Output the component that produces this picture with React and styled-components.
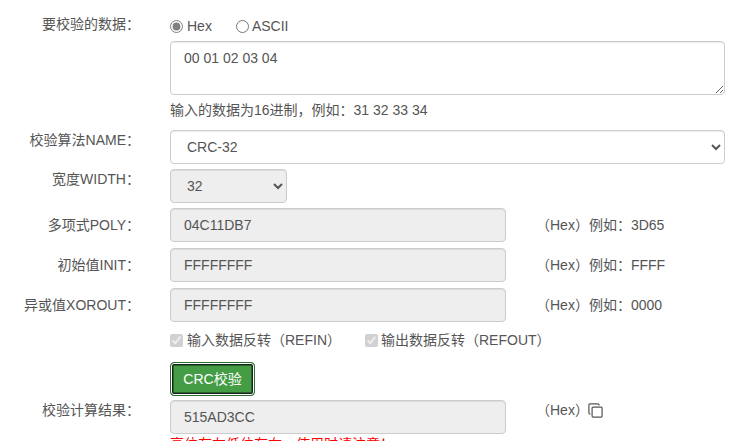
import React from "react";
import styled, { createGlobalStyle } from "styled-components";

const Global = createGlobalStyle`
  html, body { margin: 0; padding: 0; background: #fff; overflow: hidden; height: 441px; }
  body, input, select, textarea, button {
    font-family: "Liberation Sans", "Noto Sans CJK SC", sans-serif;
    font-size: 14px;
    color: #555;
  }
`;

const Form = styled.form`
  display: flex;
  flex-direction: column;
  padding-top: 13px;
`;

const Row = styled.div`
  display: grid;
  grid-template-columns: 140px 1fr;
  column-gap: 30px;
  margin-top: ${(p) => p.$top || 0}px;
`;

const Label = styled.label`
  text-align: right;
  line-height: 20px;
  padding-top: ${(p) => p.$pad || 0}px;
  white-space: nowrap;
`;

const Field = styled.div`
  display: flex;
  flex-direction: column;
  align-items: flex-start;
`;

const InlineField = styled.div`
  display: flex;
  align-items: center;
`;

const RadioGroup = styled.div`
  display: flex;
  align-items: center;
  height: 26px;
`;

const RadioLabel = styled.label`
  display: flex;
  align-items: center;
  margin-right: ${(p) => p.$gap || 0}px;
  line-height: 20px;
`;

const Radio = styled.input.attrs({ type: "radio", readOnly: true })`
  width: 13px;
  height: 13px;
  margin: 0 ${(p) => p.$after}px 0 0;
  accent-color: #808080;
`;

const TextArea = styled.textarea`
  box-sizing: border-box;
  display: block;
  width: 555px;
  height: 54px;
  margin-top: 2px;
  padding: 6px 13px;
  border: 1px solid #ccc;
  border-radius: 4px;
  line-height: 20px;
  box-shadow: inset 0 1px 1px rgba(0, 0, 0, 0.075);
  outline: none;
`;

const Hint = styled.div`
  line-height: 20px;
  margin-top: 5px;
`;

const Select = styled.select`
  box-sizing: border-box;
  display: block;
  width: ${(p) => p.$w}px;
  height: 34px;
  padding: 6px 12px;
  border: 1px solid #ccc;
  border-radius: 4px;
  background-color: ${(p) => (p.disabled ? "#eee" : "#fff")};
  box-shadow: inset 0 1px 1px rgba(0, 0, 0, 0.075);
  opacity: 1;
  color: #555;
`;

const TextInput = styled.input.attrs({ type: "text", readOnly: true })`
  box-sizing: border-box;
  display: block;
  width: 336px;
  height: 34px;
  padding: 6px 13px;
  border: 1px solid #ccc;
  border-radius: 4px;
  background: #eee;
  box-shadow: inset 0 1px 1px rgba(0, 0, 0, 0.075);
  outline: none;
`;

const Unit = styled.span`
  display: flex;
  align-items: center;
  margin-left: 30px;
  line-height: 20px;
`;

const ResultUnit = styled(Unit)`
  margin-top: -14px;
`;

const CopyIcon = styled.svg`
  width: 15px;
  height: 15px;
  margin-left: -1px;
  color: #555;
`;

const Checks = styled.div`
  display: flex;
  align-items: center;
  height: 20px;
`;

const CheckLabel = styled.label`
  display: flex;
  align-items: center;
  margin-right: ${(p) => p.$gap || 0}px;
  line-height: 20px;
`;

const Check = styled.input.attrs({ type: "checkbox", disabled: true, defaultChecked: true })`
  width: 13px;
  height: 13px;
  margin: 0 ${(p) => p.$after}px 0 0;
`;

const VerifyButton = styled.button`
  box-sizing: border-box;
  height: 34px;
  width: 85px;
  padding: 0;
  border: 1px solid #2f6b32;
  border-radius: 4px;
  background: #449d44;
  color: #fff;
  box-shadow: inset 0 0 0 1px #fff, inset 0 0 0 2.5px #16251a;
  line-height: 20px;
`;

const Warning = styled.div`
  color: #f00;
  line-height: 20px;
`;

const params = [
  { label: "多项式POLY：", value: "04C11DB7", example: "3D65", top: 5 },
  { label: "初始值INIT：", value: "FFFFFFFF", example: "FFFF", top: 6 },
  { label: "异或值XOROUT：", value: "FFFFFFFF", example: "0000", top: 6 },
];

export default function App() {
  return (
    <>
      <Global />
      <Form onSubmit={(e) => e.preventDefault()}>
        <Row>
          <Label $pad={1}>要校验的数据：</Label>
          <Field>
            <RadioGroup>
              <RadioLabel $gap={24}>
                <Radio name="fmt" defaultChecked $after={4} />
                Hex
              </RadioLabel>
              <RadioLabel>
                <Radio name="fmt" $after={3} />
                ASCII
              </RadioLabel>
            </RadioGroup>
            <TextArea defaultValue="00 01 02 03 04" spellCheck={false} />
            <Hint>输入的数据为16进制，例如：31 32 33 34</Hint>
          </Field>
        </Row>
        <Row $top={10}>
          <Label>校验算法NAME：</Label>
          <Field>
            <Select $w={555} defaultValue="CRC-32">
              <option>CRC-32</option>
            </Select>
          </Field>
        </Row>
        <Row $top={5}>
          <Label>宽度WIDTH：</Label>
          <Field>
            <Select $w={117} disabled defaultValue="32">
              <option>32</option>
            </Select>
          </Field>
        </Row>
        {params.map((p) => (
          <Row key={p.label} $top={p.top}>
            <Label $pad={7}>{p.label}</Label>
            <InlineField>
              <TextInput value={p.value} />
              <Unit>（Hex）例如：{p.example}</Unit>
            </InlineField>
          </Row>
        ))}
        <Row $top={8}>
          <span />
          <Checks>
            <CheckLabel $gap={24}>
              <Check $after={4} />
              输入数据反转（REFIN）
            </CheckLabel>
            <CheckLabel>
              <Check $after={3} />
              输出数据反转（REFOUT）
            </CheckLabel>
          </Checks>
        </Row>
        <Row $top={12}>
          <span />
          <Field>
            <VerifyButton type="button">CRC校验</VerifyButton>
          </Field>
        </Row>
        <Row $top={4}>
          <Label>校验计算结果：</Label>
          <Field>
            <InlineField>
              <TextInput value="515AD3CC" />
              <ResultUnit>
                （Hex）
                <CopyIcon viewBox="0 0 15 15" fill="none" stroke="currentColor" strokeWidth="1.2" aria-hidden="true">
                  <rect x="4.1" y="4.1" width="10" height="10" rx="1" />
                  <path d="M11 2.6V1.9a1 1 0 0 0-1-1H1.9a1 1 0 0 0-1 1V10a1 1 0 0 0 1 1h.7" />
                </CopyIcon>
              </ResultUnit>
            </InlineField>
            <Warning>高位在左低位在右，使用时请注意！</Warning>
          </Field>
        </Row>
      </Form>
    </>
  );
}
